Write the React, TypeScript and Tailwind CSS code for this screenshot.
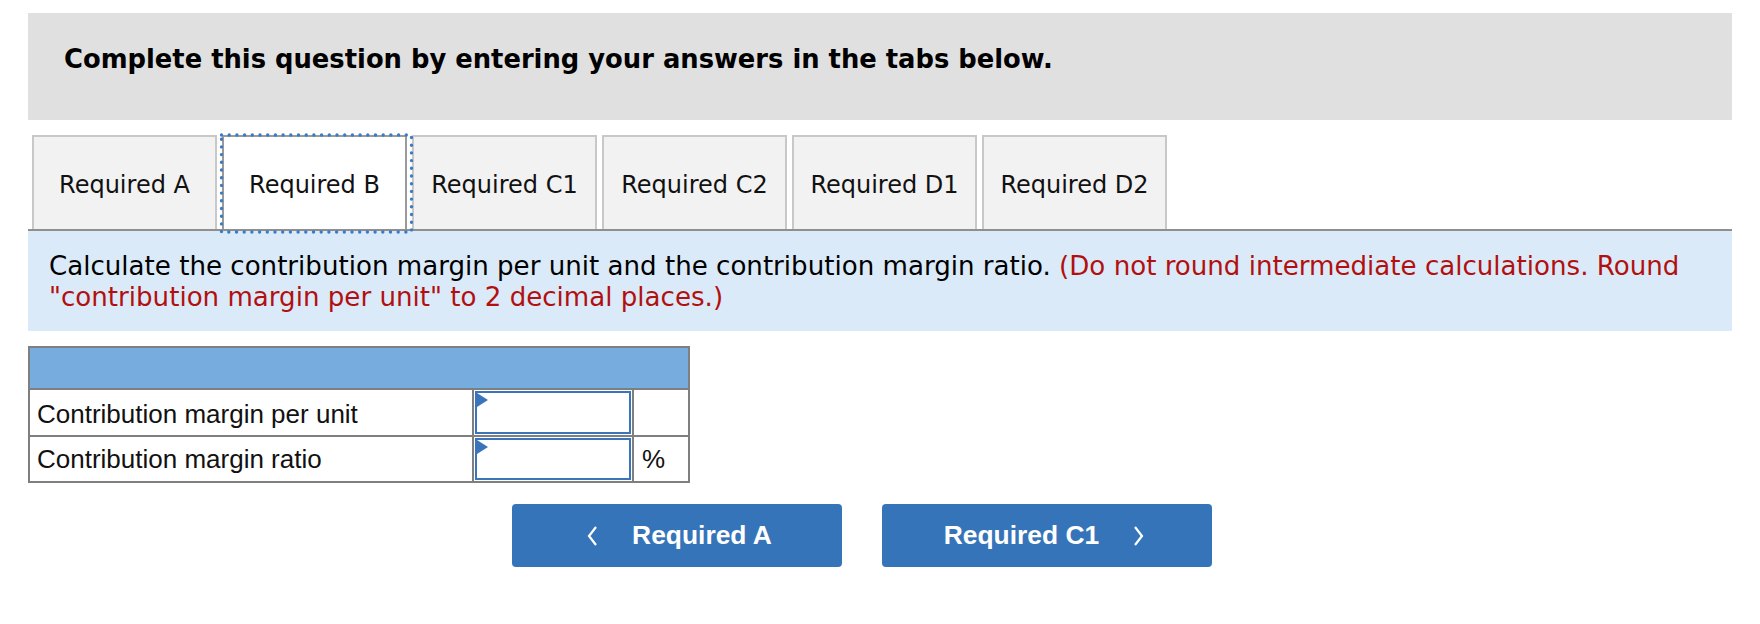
import React from "react";

const tabs = ["Required A", "Required B", "Required C1", "Required C2", "Required D1", "Required D2"];

function Tri() {
  return (
    <svg className="absolute left-0 top-0" width="11" height="14" viewBox="0 0 11 14">
      <polygon points="0,0 11,7 0,14" fill="#3a75bb" />
    </svg>
  );
}

function FocusRing() {
  return (
    <svg className="absolute left-[-5px] top-[-4px] pointer-events-none" width="195" height="101" viewBox="0 0 195 101">
      <rect
        x="2.5"
        y="2"
        width="190"
        height="97"
        fill="none"
        stroke="#3a7bc8"
        strokeWidth="3.4"
        strokeLinecap="round"
        strokeDasharray="0 7.7"
      />
    </svg>
  );
}

export default function App() {
  return (
    <div className="w-[1760px] h-[624px] bg-white pt-[13px] px-[28px]">
      <div
        className="h-[107px] bg-[#e0e0e0] pl-[36px] pt-[31px] text-[25.8px] leading-[30px] font-bold text-black"
        style={{ fontFamily: '"DejaVu Sans", Verdana, sans-serif' }}
      >
        Complete this question by entering your answers in the tabs below.
      </div>

      <div className="mt-[15px] flex gap-[5px] pl-[4px]" style={{ fontFamily: '"DejaVu Sans", Verdana, sans-serif' }}>
        {tabs.map((t, i) => (
          <div
            key={t}
            className={
              i === 1
                ? "relative w-[185px] h-[94px] flex items-center justify-center pt-[4px] bg-white border-2 border-b-0 border-[#9a9a9a] text-[24px] text-[#111]"
                : "w-[185px] h-[94px] flex items-center justify-center pt-[4px] bg-[#f2f2f2] border-2 border-b-0 border-[#c8c8c8] text-[24px] text-[#111]"
            }
          >
            {t}
            {i === 1 && <FocusRing />}
          </div>
        ))}
      </div>

      <div
        className="border-t-2 border-[#8f8f8f] bg-[#daeaf8] pl-[21px] pr-[20px] pt-[20px] pb-[18px] text-[26.1px] leading-[31px] text-black"
        style={{ fontFamily: '"DejaVu Sans", Verdana, sans-serif' }}
      >
        <p>
          Calculate the contribution margin per unit and the contribution margin ratio.{" "}
          <span className="text-[#b21010]">
            (Do not round intermediate calculations. Round "contribution margin per unit" to 2 decimal places.)
          </span>
        </p>
      </div>

      <div
        className="mt-[15px] w-[662px] border-2 border-[#7f7f7f] text-[26px] text-[#111]"
        style={{ fontFamily: '"Liberation Sans", Arial, sans-serif' }}
      >
        <div className="h-[42px] bg-[#77acdf] border-b-2 border-[#7f7f7f]" />
        <div className="flex h-[47px] border-b-2 border-[#7f7f7f]">
          <div className="w-[444px] border-r-2 border-[#7f7f7f] pl-[7px] pt-[4px] flex items-center">
            Contribution margin per unit
          </div>
          <div className="w-[160px] border-r-2 border-[#7f7f7f] p-[1px]">
            <div className="relative h-full border-2 border-[#3a75bb] bg-white">
              <Tri />
            </div>
          </div>
          <div className="flex-1" />
        </div>
        <div className="flex h-[44px]">
          <div className="w-[444px] border-r-2 border-[#7f7f7f] pl-[7px] flex items-center">
            Contribution margin ratio
          </div>
          <div className="w-[160px] border-r-2 border-[#7f7f7f] p-[1px]">
            <div className="relative h-full border-2 border-[#3a75bb] bg-white">
              <Tri />
            </div>
          </div>
          <div className="flex-1 flex items-center pl-[8px]">%</div>
        </div>
      </div>

      <div className="mt-[21px] ml-[484px] flex gap-[40px]" style={{ fontFamily: '"Liberation Sans", Arial, sans-serif' }}>
        <div className="w-[330px] h-[63px] rounded-[4px] bg-[#3674b9] flex items-center justify-center gap-[34px] pl-[5px] text-white font-bold text-[26.4px]">
          <svg width="11" height="20" viewBox="0 0 11 20">
            <polyline points="9,1 2,10 9,19" fill="none" stroke="white" strokeWidth="2.2" />
          </svg>
          <span>Required A</span>
        </div>
        <div className="w-[330px] h-[63px] rounded-[4px] bg-[#3674b9] flex items-center justify-center gap-[34px] pr-[6px] text-white font-bold text-[26.4px]">
          <span>Required C1</span>
          <svg width="11" height="20" viewBox="0 0 11 20">
            <polyline points="2,1 9,10 2,19" fill="none" stroke="white" strokeWidth="2.2" />
          </svg>
        </div>
      </div>
    </div>
  );
}
